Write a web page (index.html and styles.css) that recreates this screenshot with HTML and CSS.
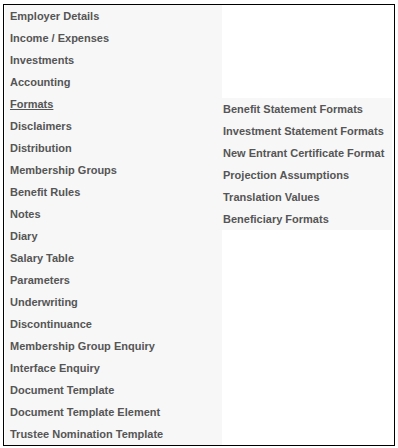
FILE: index.html
```html
<!DOCTYPE html>
<html lang="en">
<head>
    <meta charset="UTF-8">
    <title>Scheme Menu</title>
    <link rel="stylesheet" href="styles.css">
</head>
<body>
    <div class="frame">
        <ul class="menu">
            <li><a href="#">Employer Details</a></li>
            <li><a href="#">Income / Expenses</a></li>
            <li><a href="#">Investments</a></li>
            <li><a href="#">Accounting</a></li>
            <li class="has-sub open">
                <a href="#" class="hover">Formats</a>
                <!-- submenu -->
                <ul class="submenu">
                    <li><a href="#">Benefit Statement Formats</a></li>
                    <li><a href="#">Investment Statement Formats</a></li>
                    <li><a href="#">New Entrant Certificate Format</a></li>
                    <li><a href="#">Projection Assumptions</a></li>
                    <li><a href="#">Translation Values</a></li>
                    <li><a href="#">Beneficiary Formats</a></li>
                </ul>
            </li>
            <li><a href="#">Disclaimers</a></li>
            <li><a href="#">Distribution</a></li>
            <li><a href="#">Membership Groups</a></li>
            <li><a href="#">Benefit Rules</a></li>
            <li><a href="#">Notes</a></li>
            <li><a href="#">Diary</a></li>
            <li><a href="#">Salary Table</a></li>
            <li><a href="#">Parameters</a></li>
            <li><a href="#">Underwriting</a></li>
            <li><a href="#">Discontinuance</a></li>
            <li><a href="#">Membership Group Enquiry</a></li>
            <li><a href="#">Interface Enquiry</a></li>
            <li><a href="#">Document Template</a></li>
            <li><a href="#">Document Template Element</a></li>
            <li><a href="#">Trustee Nomination Template</a></li>
        </ul>
    </div>
</body>
</html>
```

FILE: styles.css
```css
* {
    box-sizing: border-box;
}

body {
    font-family: "Liberation Sans", Arial, sans-serif;
    margin: 0;
    padding: 0;
    background: #fff;
}

.frame {
    width: 392px;
    height: 442px;
    margin: 4px 0 0 3px;
    padding: 0 1px;
    border: 1px solid #000;
}

ul {
    list-style: none;
    margin: 0;
    padding: 0;
}

.menu {
    width: 217px;
    background-color: #f7f7f7;
}

.menu li {
    position: relative;
    height: 22px;
}

.menu a {
    display: block;
    height: 22px;
    line-height: 22px;
    padding-left: 5px;
    font-size: 11px;
    font-weight: bold;
    color: #555;
    text-decoration: none;
    white-space: nowrap;
}

.menu a.hover,
.menu a:hover {
    text-decoration: underline;
}

.submenu {
    display: none;
    position: absolute;
    top: 5px;
    left: 217px;
    width: 170px;
    background-color: #f7f7f7;
    z-index: 10;
}

.has-sub.open .submenu {
    display: block;
}

.submenu a {
    padding-left: 1px;
}
```
